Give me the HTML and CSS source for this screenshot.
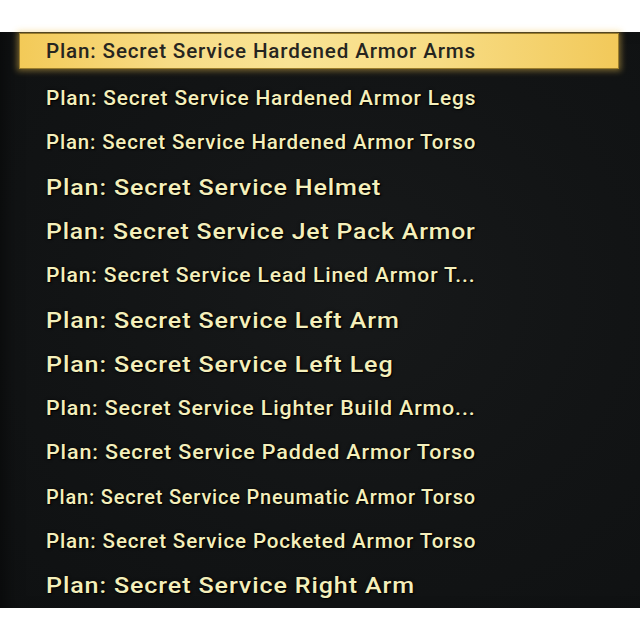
FILE: index.html
```html
<!DOCTYPE html>
<html>
<head>
<meta charset="utf-8">
<link rel="stylesheet" href="styles.css">
</head>
<body>
<div class="top"></div>
<div class="panel">
  <ul class="list">
    <li class="row selected"><div class="hl"><span class="label sm">Plan: Secret Service Hardened Armor Arms</span></div></li>
    <li class="row"><span class="label sm">Plan: Secret Service Hardened Armor Legs</span></li>
    <li class="row"><span class="label sm">Plan: Secret Service Hardened Armor Torso</span></li>
    <li class="row"><span class="label lg">Plan: Secret Service Helmet</span></li>
    <li class="row"><span class="label lg">Plan: Secret Service Jet Pack Armor</span></li>
    <li class="row"><span class="label sm">Plan: Secret Service Lead Lined Armor T...</span></li>
    <li class="row"><span class="label lg">Plan: Secret Service Left Arm</span></li>
    <li class="row"><span class="label lg">Plan: Secret Service Left Leg</span></li>
    <li class="row"><span class="label sm">Plan: Secret Service Lighter Build Armo...</span></li>
    <li class="row"><span class="label sm">Plan: Secret Service Padded Armor Torso</span></li>
    <li class="row"><span class="label sm">Plan: Secret Service Pneumatic Armor Torso</span></li>
    <li class="row"><span class="label sm">Plan: Secret Service Pocketed Armor Torso</span></li>
    <li class="row"><span class="label lg">Plan: Secret Service Right Arm</span></li>
  </ul>
</div>
<div class="bottom"></div>
<script src="script.js"></script>
</body>
</html>
```

FILE: styles.css
```css
html, body {
  margin: 0;
  padding: 0;
  background: #ffffff;
  width: 640px;
  height: 640px;
  overflow: hidden;
}
.top {
  height: 32px;
  background: #ffffff;
}
.panel {
  height: 576px;
  background:
    radial-gradient(ellipse at 55% 45%, #17191a 0%, #121415 55%, #0f1112 100%);
  box-shadow: inset 14px 0 18px -10px rgba(0,0,0,0.5);
}
.list {
  list-style: none;
  margin: 0;
  padding: 0;
  height: 100%;
  display: flex;
  flex-direction: column;
}
.row {
  flex: 1 1 0;
  display: flex;
  align-items: center;
  padding-left: 46px;
  min-height: 0;
}
.label {
  font-family: Roboto, "Liberation Sans", sans-serif;
  font-weight: 500;
  color: #f4efbb;
  white-space: nowrap;
  display: inline-block;
  letter-spacing: 0.8px;
  transform-origin: left center;
  transform: scaleX(1.1);
  text-shadow: 1px 1px 1px rgba(0,0,0,0.95), 0 0 3px rgba(0,0,0,0.8);
}
.label.sm { font-size: 19.6px; }
.label.lg { font-size: 22.8px; }
.row.selected {
  padding-left: 0;
  align-items: stretch;
}
.hl {
  flex: 1;
  margin: 1px 21px 7px 19px;
  padding-left: 26px;
  display: flex;
  align-items: center;
  background: linear-gradient(90deg, #f3ca58 0%, #f7dc86 25%, #f9e394 45%, #f7dc84 70%, #f2c95a 100%);
  border: 1px solid #9b7d2c;
  box-shadow: 0 0 6px 2px rgba(240, 196, 80, 0.45);
}
.hl .label {
  color: #26251f;
  text-shadow: none;
}
.bottom {
  height: 32px;
  background: #ffffff;
}
```

FILE: script.js
```js
(function () {
  var maxW = 430;
  var stretch = 1.1;
  var labels = document.querySelectorAll('.label');
  for (var i = 0; i < labels.length; i++) {
    var el = labels[i];
    var w = el.offsetWidth;
    var s = Math.min(stretch, maxW / w);
    el.style.transform = 'scaleX(' + s.toFixed(4) + ')';
  }
})();
```
